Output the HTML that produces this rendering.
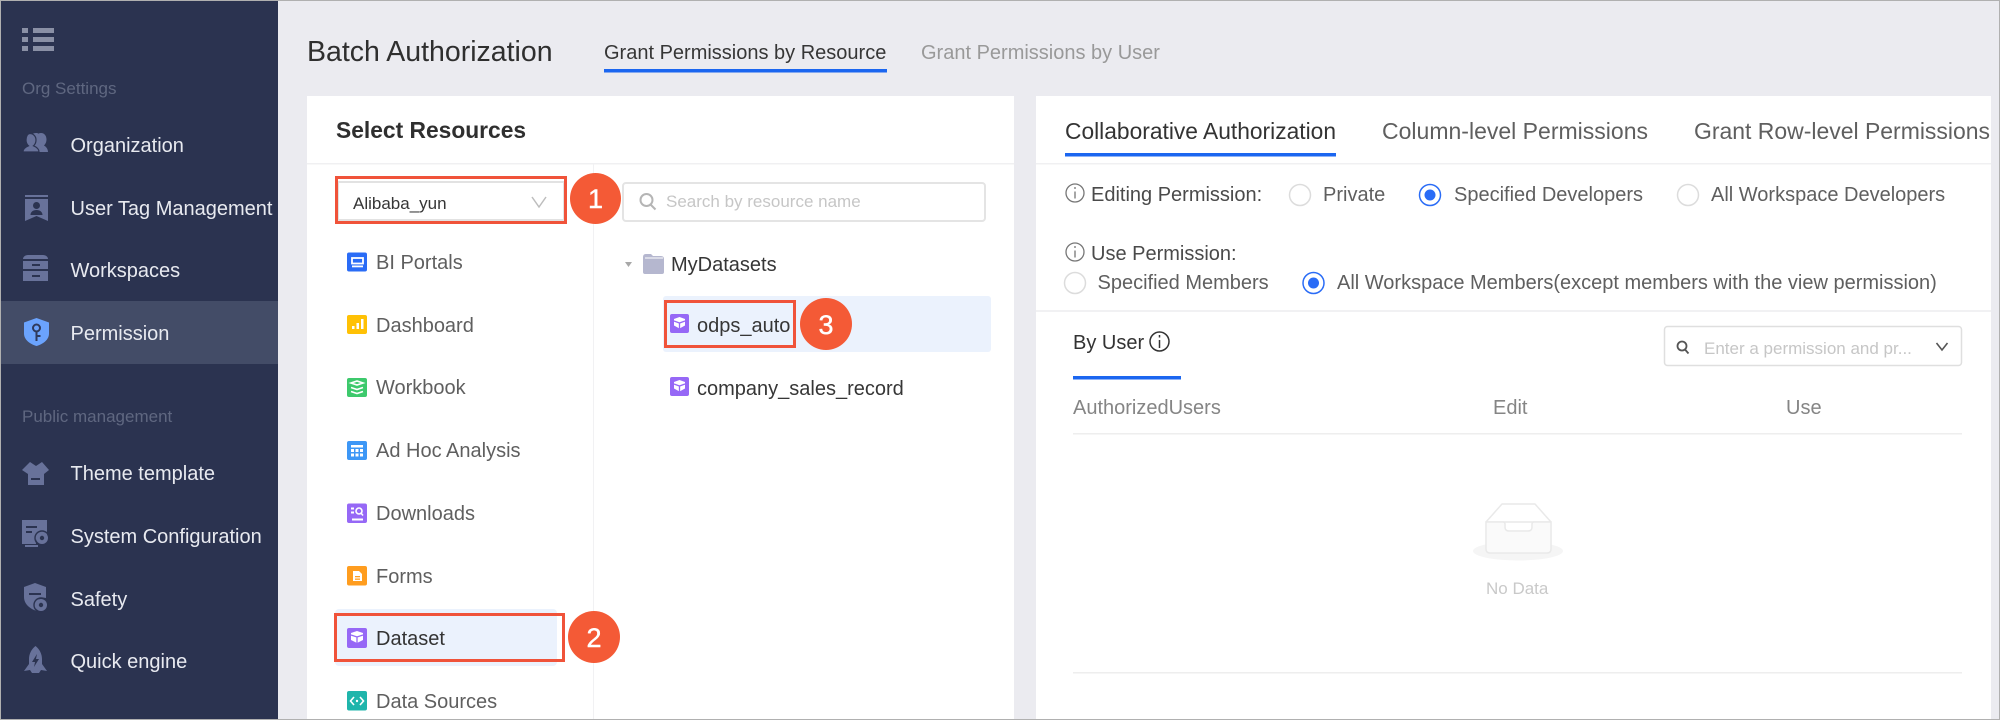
<!DOCTYPE html>
<html lang="en">
<head>
<meta charset="utf-8">
<title>Batch Authorization</title>
<style>
html,body{margin:0;padding:0;background:#ebebf0;width:2000px;height:720px;overflow:hidden}
svg{display:block;position:absolute;left:0;top:0;filter:blur(0.3px)}
text{font-family:"Liberation Sans",Arial,sans-serif;font-size:20px;fill:#5f5f5f}
.nav{fill:#e8eaf0}
.sec{fill:#5f6780;font-size:17px}
.dark{fill:#363636}
.mut{fill:#858585}
.ph{fill:#c6c6c6;font-size:17px}
.num{fill:#fff;font-size:27px;text-anchor:middle;stroke:#fff;stroke-width:.4px}
.tab{font-size:23px}
</style>
</head>
<body>
<svg width="2000" height="720" viewBox="0 0 2000 720" xmlns="http://www.w3.org/2000/svg">
<rect width="2000" height="720" fill="#ebebf0"/>

<!-- Sidebar -->
<rect x="1" y="1" width="277" height="718" fill="#2b3350"/>
<rect x="1" y="301" width="277" height="63" fill="#434c67"/>
<g fill="#8a90a5">
<rect x="22" y="28" width="6" height="5"/><rect x="33" y="28" width="21" height="5"/>
<rect x="22" y="37" width="6" height="5"/><rect x="33" y="37" width="21" height="5"/>
<rect x="22" y="46" width="6" height="5"/><rect x="33" y="46" width="21" height="5"/>
</g>
<text class="sec" x="22" y="94">Org Settings</text>
<text class="sec" x="22" y="422">Public management</text>

<g fill="#68729a">
<!-- organization -->
<path d="M41 133c3.500 0 5.500 3 5.500 6.500 0 2.500-1 4.500-2.500 6 2 1 4 3.500 4 6.500H27v-3l5-4c-1.500-1.500-2.500-3.500-2.500-6C29.500 136 32 133 36 133c1 0 2 .2 2.500.6.800-.4 1.600-.6 2.500-.6z"/>
<path d="M30 133.500c3.500 0 6 3 6 6.500 0 2.500-1 4.500-2.500 5.800 3 1.200 5.500 3.500 5.500 6.200H23c0-3 2.500-5 5.500-6.200-1.500-1.300-2.500-3.300-2.500-5.800 0-3.500 1.500-6.500 4-6.500z" stroke="#2b3350" stroke-width="1.200"/>
<!-- user tag -->
<rect x="25" y="195" width="23" height="2"/>
<path fill-rule="evenodd" d="M25 199h23v22l-11.500-5L25 221zM36.500 202a3.500 3.500 0 1 0 0 7 3.500 3.500 0 0 0 0-7zM30.500 215h12c0-3-2.500-5-6-5s-6 2-6 5z"/>
<!-- workspaces -->
<path d="M28 255h15c3 0 5 2 5 4H23c0-2 2-4 5-4z"/>
<path fill-rule="evenodd" d="M23 261h25v8H23zM32 264v2h8v-2z"/>
<path fill-rule="evenodd" d="M23 271h25v10H23zM32 275v2h8v-2z"/>
<!-- theme -->
<path fill-rule="evenodd" d="M30 462l6 4 6-4 7 8-5 4v11H28v-11l-6-4zM31 478v2h9v-2z"/>
<!-- system -->
<path fill-rule="evenodd" d="M22 520h25v15a8 8 0 0 0-11 9H22zM26 526v2h11v-2zM26 531v2h6v-2z"/>
<rect x="25" y="545" width="13" height="2"/>
<circle cx="42" cy="538" r="6"/>
<!-- safety -->
<path fill-rule="evenodd" d="M35 583l11 4v11a8 8 0 0 0-10 10l1 3c-7-2-13-7-13-14v-10zM29 593v2h12v-2z"/>
<circle cx="41" cy="605" r="6"/>
<!-- quick -->
<path fill-rule="evenodd" d="M35.500 646c4 3 6.500 8 6.500 13v5l5 7-6-1-2 3h-7l-2-3-6 1 5-7v-5c0-5 2.500-10 6.500-13zM37 654l-5 8h3l-1 5 5-8h-3z"/>
</g>
<g fill="#2b3350">
<circle cx="42" cy="538" r="2.200"/><circle cx="41" cy="605" r="2.200"/>
</g>
<g fill="none" stroke="#2b3350" stroke-width="1.400">
<circle cx="42" cy="538" r="7"/><circle cx="41" cy="605" r="7"/>
</g>
<!-- permission shield -->
<path fill="#6ba3fd" d="M36.500 318l12.500 4.500v11c0 6-5.500 10.500-12.500 12.500-7-2-12.500-6.500-12.500-12.500v-11z"/>
<g fill="none" stroke="#2f3a5c" stroke-width="2"><circle cx="36.500" cy="328" r="3.500"/><path d="M36.500 331.500V341M36.500 336h4"/></g>

<g class="nav">
<text class="nav" x="70.500" y="152">Organization</text>
<text class="nav" x="70.500" y="215">User Tag Management</text>
<text class="nav" x="70.500" y="277">Workspaces</text>
<text class="nav" x="70.500" y="340">Permission</text>
<text class="nav" x="70.500" y="480">Theme template</text>
<text class="nav" x="70.500" y="543">System Configuration</text>
<text class="nav" x="70.500" y="606">Safety</text>
<text class="nav" x="70.500" y="668">Quick engine</text>
</g>

<!-- Header -->
<text x="307" y="61" style="font-size:28.500px;fill:#2f2f2f">Batch Authorization</text>
<text class="dark" x="604" y="59">Grant Permissions by Resource</text>
<rect x="604" y="69" width="283" height="3.500" fill="#1b66f0"/>
<text x="921" y="59" style="fill:#999">Grant Permissions by User</text>

<!-- Left panel -->
<rect x="307" y="96" width="707" height="623" fill="#fff"/>
<rect x="307" y="163" width="707" height="1.500" fill="#f0f0f2"/>
<rect x="593" y="164" width="1" height="555" fill="#f1f1f3"/>
<text x="336" y="138" style="font-size:22.800px;font-weight:700;fill:#2f2f2f">Select Resources</text>

<!-- select -->
<rect x="338" y="182" width="226" height="38" fill="#fff" stroke="#e2e2e2" stroke-width="2"/>
<text class="dark" x="353" y="209" style="font-size:17px">Alibaba_yun</text>
<path d="M532 197l7 10 7-10" fill="none" stroke="#bdbdbd" stroke-width="1.500"/>
<!-- search -->
<rect x="623" y="183" width="362" height="38" rx="3" fill="#fff" stroke="#e4e4e4" stroke-width="2"/>
<circle cx="646.500" cy="200" r="6" fill="none" stroke="#b5b5b5" stroke-width="2"/>
<path d="M651 205l4.500 4.500" stroke="#b5b5b5" stroke-width="2"/>
<text class="ph" x="666" y="207">Search by resource name</text>

<!-- menu -->
<rect x="335" y="609" width="222" height="57" rx="4" fill="#ebf2fd"/>
<g>
<rect x="347" y="252.500" width="20" height="19" rx="2" fill="#2a6cf6"/>
<rect x="352" y="258" width="11" height="5.500" fill="none" stroke="#fff" stroke-width="1.800"/>
<rect x="352" y="265.500" width="11" height="1.800" fill="#fff"/>

<rect x="347" y="315" width="20" height="19" rx="2" fill="#ffc105"/>
<g fill="#fff"><rect x="352" y="326" width="2.500" height="3"/><rect x="356.500" y="323" width="2.500" height="6"/><rect x="361" y="319" width="2.500" height="10"/></g>

<rect x="347" y="378" width="20" height="19" rx="2" fill="#3dc96c"/>
<g fill="none" stroke="#fff" stroke-width="1.600"><path d="M351 383l6-2 6 2-6 2z"/><path d="M351 387.500l6 2 6-2"/><path d="M351 391.500l6 2 6-2"/></g>

<rect x="347" y="441" width="20" height="19" rx="2" fill="#3d97f6"/>
<rect x="351" y="445" width="12" height="2.500" fill="#fff"/>
<g fill="#fff"><rect x="351" y="449" width="3" height="3"/><rect x="355.500" y="449" width="3" height="3"/><rect x="360" y="449" width="3" height="3"/><rect x="351" y="453.500" width="3" height="3"/><rect x="355.500" y="453.500" width="3" height="3"/><rect x="360" y="453.500" width="3" height="3"/></g>

<rect x="347" y="503.500" width="20" height="19.500" rx="2" fill="#9668f6"/>
<g fill="#fff"><rect x="351" y="507.500" width="3" height="2"/><rect x="351" y="511.500" width="3" height="2"/><rect x="352" y="518.500" width="11" height="2"/></g>
<circle cx="359" cy="511" r="3" fill="none" stroke="#fff" stroke-width="1.600"/>
<path d="M361 513l2 2.500" stroke="#fff" stroke-width="1.500"/>

<rect x="347" y="566" width="20" height="19.500" rx="2" fill="#ff9d1f"/>
<path d="M353 571h6l3 3v7h-9z" fill="#fff"/>
<rect x="355" y="576" width="5" height="1.300" fill="#ff9d1f"/><rect x="355" y="578.500" width="5" height="1.300" fill="#ff9d1f"/>

<rect x="347" y="691" width="20" height="19.500" rx="2" fill="#1fb5ab"/>
<g fill="none" stroke="#fff" stroke-width="1.600"><path d="M354 697l-3.500 4 3.500 4"/><path d="M360 697l3.500 4-3.500 4"/></g>
<circle cx="357" cy="701" r="1.200" fill="#fff"/>
</g>
<text x="376" y="269">BI Portals</text>
<text x="376" y="332">Dashboard</text>
<text x="376" y="394">Workbook</text>
<text x="376" y="457">Ad Hoc Analysis</text>
<text x="376" y="520">Downloads</text>
<text x="376" y="583">Forms</text>
<text x="376" y="645" style="fill:#333">Dataset</text>
<text x="376" y="708">Data Sources</text>

<!-- tree -->
<path d="M625 262h7l-3.500 5z" fill="#a8a8a8"/>
<path d="M643 257q0-3 3-3h5l2 2h8q3 0 3 3v13q0 2-2 2h-17q-2 0-2-2z" fill="#b5b7cf"/>
<path d="M645 258h18" stroke="#fff" stroke-width="1"/>
<text class="dark" x="671" y="271">MyDatasets</text>
<rect x="663" y="296" width="328" height="56" rx="3" fill="#ebf2fd"/>
<text class="dark" x="697" y="332">odps_auto</text>
<text class="dark" x="697" y="395">company_sales_record</text>

<!-- cube icons -->
<g>
<rect x="670" y="314" width="19" height="19" rx="2" fill="#9668f6"/>
<path d="M674 319l5.500-2 5.500 2v6.500l-5.500 3-5.500-3z" fill="#fff"/>
<path d="M674 321l5.500 2 5.500-2M679.500 323v5.500" stroke="#9668f6" stroke-width="1.300" fill="none"/>
</g>
<g>
<rect x="670" y="377" width="19" height="19" rx="2" fill="#9668f6"/>
<path d="M674 382l5.500-2 5.500 2v6.500l-5.500 3-5.500-3z" fill="#fff"/>
<path d="M674 384l5.500 2 5.500-2M679.500 386v5.500" stroke="#9668f6" stroke-width="1.300" fill="none"/>
</g>
<g>
<rect x="347" y="628" width="20" height="20" rx="2" fill="#9668f6"/>
<path d="M351 633l6-2 6 2v7l-6 3-6-3z" fill="#fff"/>
<path d="M351 635l6 2 6-2M357 637v6" stroke="#9668f6" stroke-width="1.300" fill="none"/>
</g>

<!-- annotations -->
<g fill="none" stroke="#f0533a" stroke-width="3">
<rect x="336.500" y="177.500" width="229" height="45"/>
<rect x="335.500" y="614.500" width="228" height="46"/>
<rect x="665.500" y="301.500" width="129" height="45"/>
</g>
<g fill="#f45a36">
<circle cx="595.500" cy="198.500" r="25.500"/>
<circle cx="594" cy="637" r="26"/>
<circle cx="826" cy="324" r="26"/>
</g>
<text class="num" x="595.500" y="208">1</text>
<text class="num" x="594" y="647">2</text>
<text class="num" x="826" y="334">3</text>

<!-- Right panel -->
<rect x="1036" y="96" width="955" height="623" fill="#fff"/>
<text class="tab" x="1065" y="139" textLength="271" lengthAdjust="spacingAndGlyphs" style="fill:#333">Collaborative Authorization</text>
<text class="tab" x="1382" y="139" textLength="266" lengthAdjust="spacingAndGlyphs">Column-level Permissions</text>
<text class="tab" x="1694" y="139" textLength="296" lengthAdjust="spacingAndGlyphs">Grant Row-level Permissions</text>
<rect x="1065" y="153" width="271" height="3.500" fill="#1b66f0"/>
<rect x="1036" y="163" width="955" height="1.500" fill="#f0f0f2"/>

<g fill="none" stroke="#777" stroke-width="1.300">
<circle cx="1075" cy="193" r="9"/><path d="M1075 191.500v7M1075 187v2"/>
<circle cx="1075" cy="252" r="9"/><path d="M1075 250.500v7M1075 246v2"/>
</g>
<text class="dark" x="1091" y="201" style="fill:#4a4a4a">Editing Permission:</text>
<text class="dark" x="1091" y="260" style="fill:#4a4a4a">Use Permission:</text>

<g fill="#fff" stroke="#dcdcdc" stroke-width="1.500">
<circle cx="1300" cy="195" r="10.500"/>
<circle cx="1688" cy="195" r="10.500"/>
<circle cx="1075" cy="283" r="10.500"/>
</g>
<g fill="#fff" stroke="#2a6cf6" stroke-width="1.500">
<circle cx="1430" cy="195" r="10.500"/>
<circle cx="1313.500" cy="283" r="10.500"/>
</g>
<g fill="#2a6cf6"><circle cx="1430" cy="195" r="5.500"/><circle cx="1313.500" cy="283" r="5.500"/></g>
<text x="1323" y="201">Private</text>
<text x="1454" y="201">Specified Developers</text>
<text x="1711" y="201">All Workspace Developers</text>
<text x="1097.500" y="289">Specified Members</text>
<text x="1337" y="289">All Workspace Members(except members with the view permission)</text>
<rect x="1036" y="310" width="955" height="2" fill="#f1f1f3"/>

<text class="dark" x="1073" y="349" style="fill:#333">By User</text>
<g fill="none" stroke="#333" stroke-width="1.500"><circle cx="1159.500" cy="341.500" r="9.500"/><path d="M1159.500 340v8M1159.500 335v2.500"/></g>
<rect x="1073" y="376" width="108" height="3.500" fill="#1b66f0"/>

<rect x="1664.500" y="326.500" width="297" height="39" rx="3" fill="#fff" stroke="#dfdfdf" stroke-width="1.500"/>
<circle cx="1682" cy="346" r="4.500" fill="none" stroke="#555" stroke-width="1.800"/>
<path d="M1685 349.500l3.500 4" stroke="#555" stroke-width="1.800"/>
<text class="ph" x="1704" y="354">Enter a permission and pr...</text>
<path d="M1936.500 343l5.500 7 5.500-7" fill="none" stroke="#555" stroke-width="1.600"/>

<text class="mut" x="1073" y="414">AuthorizedUsers</text>
<text class="mut" x="1493" y="414">Edit</text>
<text class="mut" x="1786" y="414">Use</text>
<rect x="1073" y="433" width="889" height="1.500" fill="#eeeeee"/>

<ellipse cx="1518" cy="551" rx="45" ry="9.500" fill="#f5f5f5"/>
<path d="M1486 522l16-18h33l16 18z" fill="#fff" stroke="#e9e9e9" stroke-width="1.500" stroke-linejoin="round"/>
<path d="M1486 522h17q2 0 2 2v3q0 4 4 4h19q4 0 4-4v-3q0-2 2-2h17v27q0 4-4 4h-57q-4 0-4-4z" fill="#fafafa" stroke="#e9e9e9" stroke-width="1.500"/>
<text x="1486" y="594" style="font-size:17px;fill:#c9c9c9">No Data</text>
<rect x="1073" y="672" width="889" height="1.500" fill="#eeeeee"/>

<!-- outer frame -->
<rect x="0.500" y="0.500" width="1999" height="719" fill="none" stroke="#b0b0b0" stroke-width="1"/>
</svg>
</body>
</html>
